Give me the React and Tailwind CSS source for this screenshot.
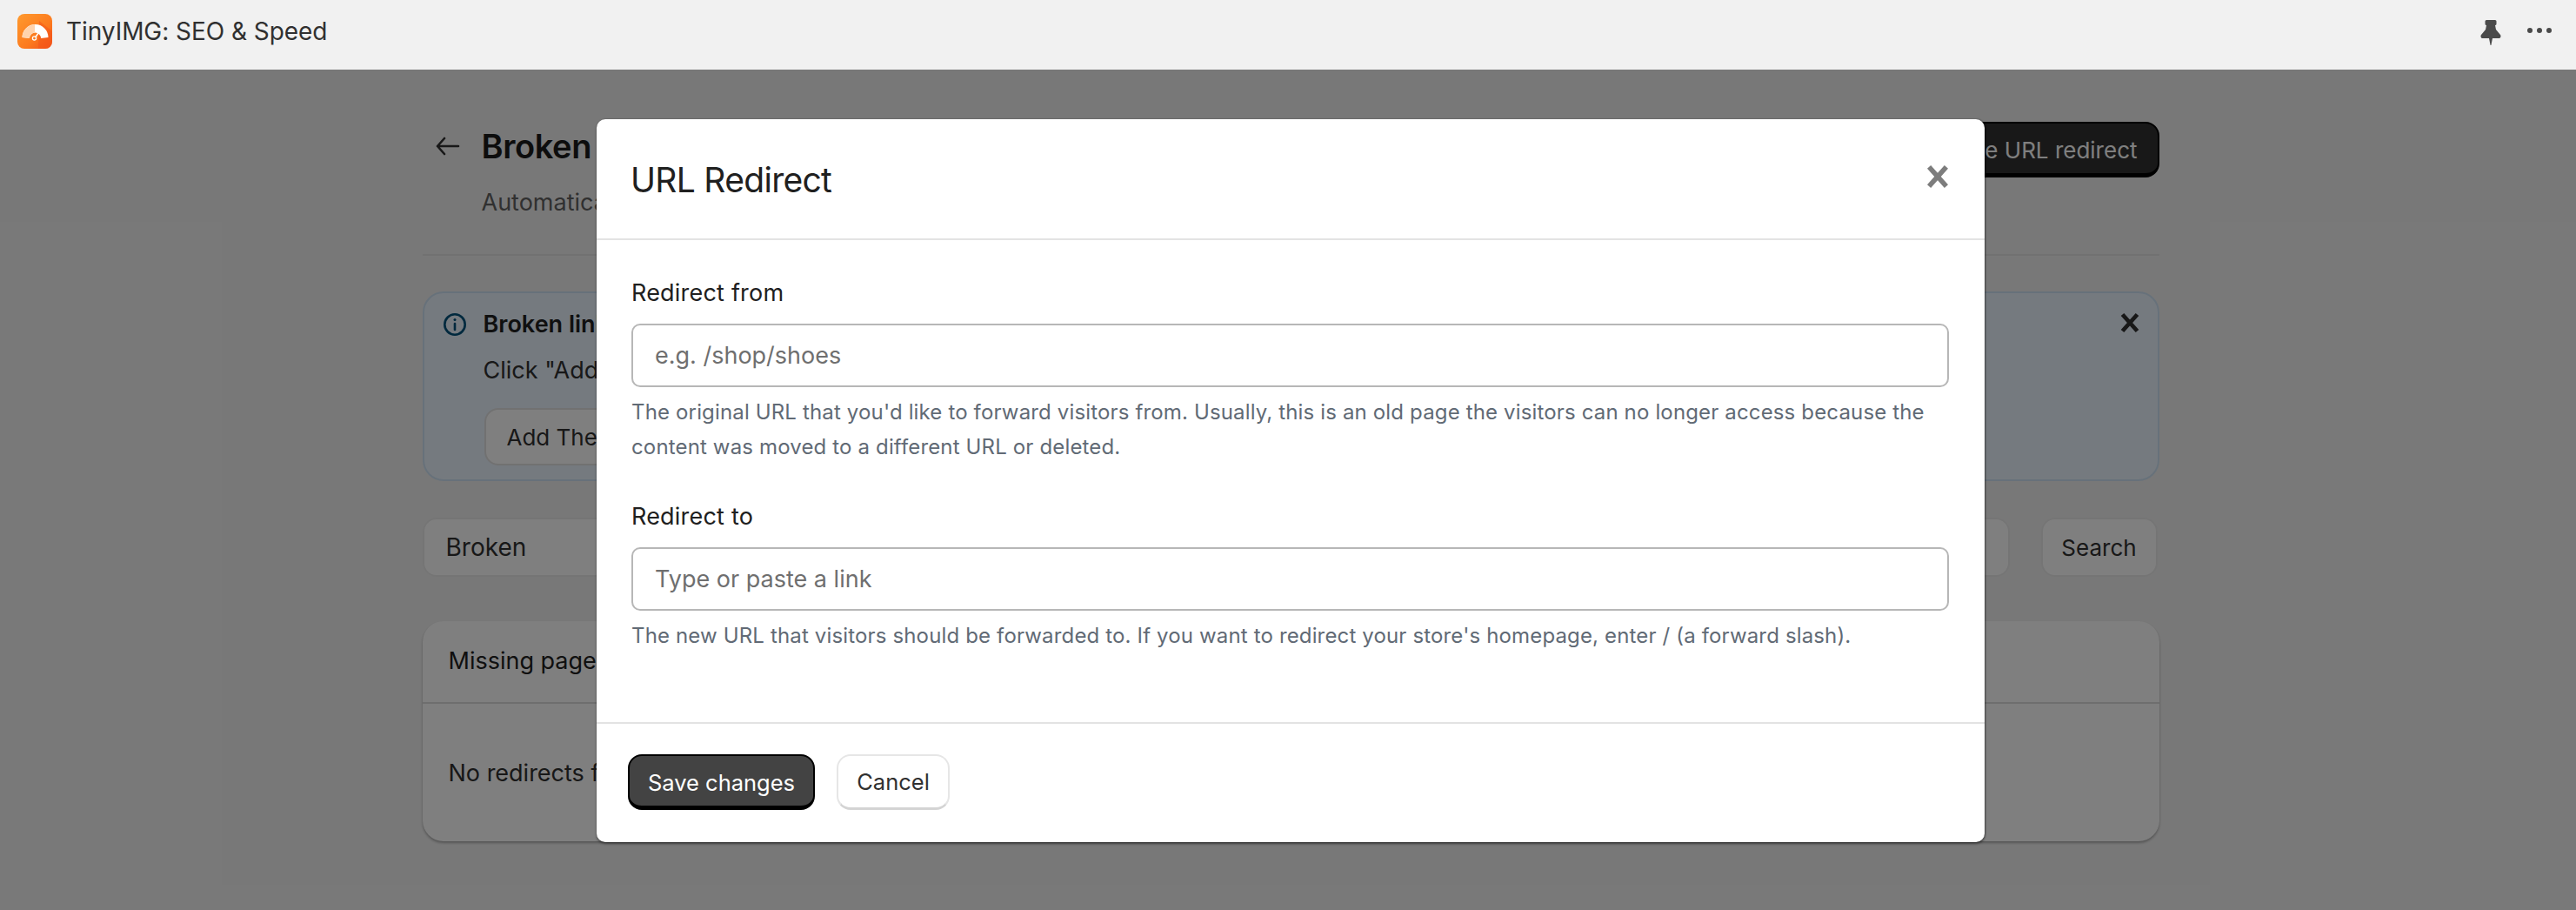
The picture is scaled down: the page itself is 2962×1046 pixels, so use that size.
import React from "react";

function Logo() {
  return (
    <svg width="40" height="40" viewBox="0 0 40 40" className="shrink-0">
      <defs>
        <linearGradient id="lg" x1="0" y1="0" x2="1" y2="1">
          <stop offset="0" stopColor="#ff9a2e" />
          <stop offset="0.6" stopColor="#fc7a1e" />
          <stop offset="1" stopColor="#f0501a" />
        </linearGradient>
      </defs>
      <rect width="40" height="40" rx="8" fill="url(#lg)" />
      <path d="M25 8 L40 20 V32 A8 8 0 0 1 32 40 H24 Z" fill="#f4561a" opacity="0.55" />
      <path d="M5.5 27 A15 15 0 0 1 35.5 27 L27 28 A6.5 6.5 0 0 0 14 28 Z" fill="#ffffff" />
      <path d="M5.5 27 A15 15 0 0 1 20 12.3 L20 21.5 A6.5 6.5 0 0 0 14 28 Z" fill="#ffd3ad" />
      <circle cx="19.5" cy="28" r="2.1" fill="none" stroke="#fff" strokeWidth="1.3" />
      <path d="M21 26.5 L26 19" stroke="#fff" strokeWidth="1.5" strokeLinecap="round" />
    </svg>
  );
}

function Pin() {
  return (
    <svg width="24" height="30" viewBox="0 0 24 30" fill="#4a4a4a">
      <path d="M5.5 1.5 a1.5 1.5 0 0 1 1.5-1.5 h10 a1.5 1.5 0 0 1 1.5 1.5 v3 a1.5 1.5 0 0 1-1.5 1.5 l1 5 l5 6 c1 1.3 .5 4-1.5 4 H14 l-1.6 8 h-.8 L10 21 H2.5 C.5 21 0 18.3 1 17 l5-6 l1-5 a1.5 1.5 0 0 1-1.5-1.5 z" />
    </svg>
  );
}

function CloseX({ color, size }) {
  return (
    <svg width={size} height={size} viewBox="0 0 24 24" fill="none">
      <path d="M3.5 2.5 L20.5 21.5 M20.5 2.5 L3.5 21.5" stroke={color} strokeWidth="4.8" strokeLinecap="butt" />
    </svg>
  );
}

function Field({ label, placeholder, children, last }) {
  return (
    <div className={last ? "" : "mb-[40px]"}>
      <div className="text-[27px] leading-[40px] tracking-[0.2px] text-[#202020] mb-[15px]">{label}</div>
      <input
        readOnly
        placeholder={placeholder}
        className="block w-full h-[73px] px-[25px] rounded-[10px] border-2 border-[#b7b7b7] bg-white text-[27px] outline-none placeholder:text-[#6f6f6f]"
      />
      <div className="mt-[9px] text-[24px] leading-[40px] tracking-[0.15px] text-[#616a75]">{children}</div>
    </div>
  );
}

export default function App() {
  return (
    <div className="relative h-[1046px] w-full overflow-hidden bg-[#f1f1f1] font-['Inter',sans-serif]">
      <header className="relative z-20 flex h-[80px] items-start justify-between bg-[#f1f1f1] pl-[20px] pr-[28px]">
        <div className="flex items-center gap-[16px] pt-[16px]">
          <Logo />
          <span className="text-[28px] leading-[40px] tracking-[-0.05px] text-[#303030]">TinyIMG: SEO &amp; Speed</span>
        </div>
        <div className="flex items-center gap-[30px] pt-[23px]">
          <Pin />
          <div className="flex gap-[5px] pb-[6px]">
            <span className="h-[6px] w-[6px] rounded-full bg-[#4a4a4a]" />
            <span className="h-[6px] w-[6px] rounded-full bg-[#4a4a4a]" />
            <span className="h-[6px] w-[6px] rounded-full bg-[#4a4a4a]" />
          </div>
        </div>
      </header>

      <main className="pl-[6px]">
        <div className="mx-auto w-[1997px]">
          <div className="flex items-start justify-between pt-[60px] pb-[39px] border-b-2 border-[#e3e3e3]">
            <div className="flex items-start">
              <svg width="30" height="24" viewBox="0 0 30 24" fill="none" stroke="#303030" strokeWidth="2.6" strokeLinecap="round" strokeLinejoin="round" className="ml-[14px] mt-[16px]">
                <path d="M27 12 H3 M11 3 L3 12 L11 21" />
              </svg>
              <div className="ml-[24px]">
                <h1 className="text-[38px] leading-[56px] font-semibold tracking-[-0.4px] text-[#1a1a1a]">Broken</h1>
                <p className="mt-[17px] text-[27px] leading-[40px] text-[#616161]">Automatically</p>
              </div>
            </div>
            <button className="h-[64px] rounded-[16px] border-2 border-black border-b-[5px] bg-[#303030] px-[23px] pt-[3px] text-[26px] text-white">
              Create URL redirect
            </button>
          </div>

          <section className="relative mt-[41px] h-[218px] rounded-[24px] border-2 border-[#cfe3f5] bg-[#eaf4ff] pl-[21px] pt-[16px]">
            <div className="flex items-center gap-[19px]">
              <svg width="28" height="28" viewBox="0 0 28 28" fill="none" stroke="#00527c" strokeWidth="2.6">
                <circle cx="14" cy="14" r="11.7" />
                <path d="M14 13 V20" strokeLinecap="round" />
                <circle cx="14" cy="8.6" r="1.5" fill="#00527c" stroke="none" />
              </svg>
              <span className="text-[27px] leading-[40px] font-semibold text-[#202020]">Broken links</span>
            </div>
            <p className="ml-[47px] mt-[13px] text-[27px] leading-[40px] text-[#303030]">Click "Add</p>
            <button className="ml-[48px] mt-[23px] h-[66px] rounded-[16px] border-2 border-[#e3e3e3] bg-white px-[24px] text-[26px] text-[#303030]">
              Add Theme
            </button>
            <div className="absolute right-[20px] top-[22px]">
              <CloseX color="#303030" size={24} />
            </div>
          </section>

          <div className="mt-[42px] mr-[2px] flex gap-[36px]">
            <div className="flex h-[68px] flex-1 items-center rounded-[16px] border-2 border-[#ebebeb] bg-white pl-[25px] text-[28px] text-[#303030]">
              Broken
            </div>
            <button className="h-[68px] w-[134px] rounded-[16px] border-2 border-[#ebebeb] bg-white text-[26px] text-[#303030]">
              Search
            </button>
          </div>

          <section className="mt-[51px] h-[253px] rounded-[24px] bg-white shadow-[0_2px_3px_rgba(0,0,0,0.3)]">
            <div className="flex h-[95px] items-center border-b-2 border-[#dcdcdc] pl-[30px] text-[27px] text-[#202020]">
              Missing pages
            </div>
            <div className="flex items-center pl-[30px] pt-[60px] text-[27px] leading-[40px] text-[#303030]">No redirects found</div>
          </section>
        </div>
      </main>

      <div className="absolute inset-0 top-[80px] z-10 flex items-start justify-center bg-black/50 pl-[6px] pt-[57px]">
        <div className="flex h-[831px] w-[1596px] flex-col rounded-[10px] bg-white shadow-[0_2px_3px_rgba(0,0,0,0.4),1px_0_2px_rgba(0,0,0,0.35)]">
          <div className="flex h-[139px] items-center justify-between border-b-2 border-[#e3e3e3] pl-[39px] pr-[40px]">
            <h2 className="pt-[3px] text-[39px] leading-[52px] tracking-[-0.7px] text-[#202020]">URL Redirect</h2>
            <div className="pb-[6px]"><CloseX color="#7d7d7d" size={28} /></div>
          </div>
          <div className="flex-1 pl-[40px] pr-[41px] pt-[41px]">
            <Field label="Redirect from" placeholder="e.g. /shop/shoes">
              The original URL that you'd like to forward visitors from. Usually, this is an old page the visitors can no longer access because the
              <br />
              content was moved to a different URL or deleted.
            </Field>
            <Field label="Redirect to" placeholder="Type or paste a link" last>
              The new URL that visitors should be forwarded to. If you want to redirect your store's homepage, enter / (a forward slash).
            </Field>
          </div>
          <div className="flex h-[138px] gap-[25px] border-t-2 border-[#e3e3e3] pl-[36px] pt-[35px]">
            <button className="h-[64px] w-[215px] rounded-[16px] border-2 border-black border-b-[5px] bg-[#434343] pt-[5px] text-[25.5px] text-white">
              Save changes
            </button>
            <button className="h-[64px] w-[130px] rounded-[16px] border-2 border-[#e6e6e6] border-b-[3px] border-b-[#d4d4d4] bg-white pt-[2px] text-[25.5px] text-[#303030]">
              Cancel
            </button>
          </div>
        </div>
      </div>
    </div>
  );
}
